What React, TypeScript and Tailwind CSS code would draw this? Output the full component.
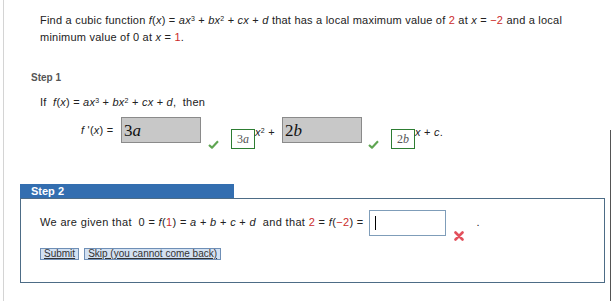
import type { ReactNode } from "react";

function Red({ children }: { children: ReactNode }) {
  return <span className="text-[#cc2b2b]">{children}</span>;
}

function Check({ className = "" }: { className?: string }) {
  return (
    <svg viewBox="0 0 12 10" className={`h-[9px] w-[11px] shrink-0 ${className}`}>
      <path d="M1 5.5 L4.3 8.5 L11 1.5" fill="none" stroke="#5fa552" strokeWidth="2.4" strokeLinejoin="round" />
    </svg>
  );
}

function Cross({ className = "" }: { className?: string }) {
  return (
    <svg viewBox="0 0 10 10" className={`h-[10px] w-[10px] shrink-0 ${className}`}>
      <path d="M1.5 1.5 L8.5 8.5 M8.5 1.5 L1.5 8.5" stroke="#e2505c" strokeWidth="2.6" strokeLinecap="round" />
    </svg>
  );
}

function AnswerField({ coef, letter }: { coef: string; letter: string }) {
  return (
    <div className="flex h-[26px] w-[80px] shrink-0 items-center border border-[#8a8a8a] bg-[#c8c8c8] pl-[2px] font-['Liberation_Serif',serif] text-[17px] leading-none tracking-normal text-[#111]">
      {coef}
      <i>{letter}</i>
    </div>
  );
}

function CorrectBox({ coef, letter }: { coef: string; letter: string }) {
  return (
    <div className="mt-[12px] flex h-[20px] w-[24px] shrink-0 items-center justify-center border border-[#2d7d32] font-['Liberation_Serif',serif] text-[12px] leading-none tracking-normal text-[#555]">
      {coef}
      <i>{letter}</i>
    </div>
  );
}

function Sup({ children }: { children: ReactNode }) {
  return <sup className="text-[7px]">{children}</sup>;
}

export default function App() {
  return (
    <div className="flex h-[301px] w-[612px] bg-white font-['Liberation_Sans',Arial,sans-serif] text-[11px] tracking-[0.22px] text-[#222]">
      <div className="ml-[3px] w-px shrink-0 bg-[#d4d4d4]" />

      <div className="flex-1">
        <div className="pl-[36px] pt-[12px] leading-[17px]">
          <p>
            Find a cubic function <i>f</i>(<i>x</i>) = <i>a</i><i>x</i>
            <Sup>3</Sup> + <i>b</i><i>x</i>
            <Sup>2</Sup> + <i>c</i><i>x</i> + <i>d</i> that has a local maximum value of <Red>2</Red> at{" "}
            <i>x</i> = <Red>−2</Red> and a local
          </p>
          <p>
            minimum value of 0 at <i>x</i> = <Red>1</Red>.
          </p>
        </div>

        <div className="mt-[25px] pl-[27px] text-[10px] font-bold leading-[14px] tracking-normal text-[#555]">
          Step 1
        </div>

        <p className="mt-[9px] pl-[36px] leading-[17px]">
          If&nbsp; <i>f</i>(<i>x</i>) = <i>a</i><i>x</i>
          <Sup>3</Sup> + <i>b</i><i>x</i>
          <Sup>2</Sup> + <i>c</i><i>x</i> + <i>d</i>,&nbsp; then
        </p>

        <div className="mt-[6px] flex h-[32px] items-start">
          <span className="ml-[77px] flex h-[26px] w-[40px] items-center">
            <i>f</i>&nbsp;'(<i>x</i>) =
          </span>
          <AnswerField coef="3" letter="a" />
          <Check className="ml-[7px] mt-[23px]" />
          <div className="ml-[12px]">
            <CorrectBox coef="3" letter="a" />
          </div>
          <span className="mt-[7px] w-[27px] shrink-0 leading-[17px]">
            <i>x</i>
            <Sup>2</Sup> +
          </span>
          <AnswerField coef="2" letter="b" />
          <Check className="ml-[6px] mt-[23px]" />
          <div className="ml-[12px]">
            <CorrectBox coef="2" letter="b" />
          </div>
          <span className="mt-[7px] leading-[17px]">
            <i>x</i> + <i>c</i>.
          </span>
        </div>

        <div className="ml-[16px] mt-[35px] h-[14px] w-[214px] bg-[#336eb0] pl-[11px] text-[11px] font-bold leading-[14px] tracking-normal text-white">
          Step 2
        </div>
        <div className="ml-[16px] h-[85px] w-[585px] border border-[#4d6c86]">
          <div className="flex h-[28px] items-start pl-[19px] pt-[11px]">
            <span className="mt-[4px] leading-[17px] tracking-[0.34px]">
              We are given that&nbsp; 0 = <i>f</i>(<Red>1</Red>) = <i>a</i> + <i>b</i> + <i>c</i> + <i>d</i>&nbsp; and that{" "}
              <Red>2</Red> = <i>f</i>(<Red>−2</Red>) =
            </span>
            <div className="ml-[5px] flex h-[26px] w-[77px] shrink-0 items-center border border-[#7f9db9] bg-white pl-[5px]">
              <div className="h-[14px] w-px bg-black" />
            </div>
            <Cross className="ml-[8px] mt-[21px]" />
            <span className="ml-[13px] mt-[4px] leading-[17px]">.</span>
          </div>
          <div className="mt-[21px] flex gap-[5px] pl-[19px]">
            <button className="h-[12px] border border-[#6f8fb6] bg-[#d3e1f2] px-[3px] text-[10px] leading-[10px] tracking-normal text-[#333] underline">
              Submit
            </button>
            <button className="h-[12px] border border-[#6f8fb6] bg-[#d3e1f2] px-[3px] text-[10px] leading-[10px] tracking-normal text-[#333] underline">
              Skip (you cannot come back)
            </button>
          </div>
        </div>
      </div>

      <div className="mt-[130px] w-px shrink-0 bg-[#555]" />
      <div className="w-px shrink-0" />
    </div>
  );
}
